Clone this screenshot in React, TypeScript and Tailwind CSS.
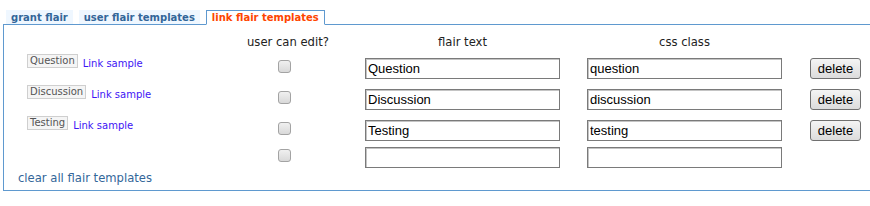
const VERDANA = { fontFamily: '"DejaVu Sans", Verdana, sans-serif' };

const rows = [
  { label: 'Question', text: 'Question', css: 'question', h: 'h-[31px]' },
  { label: 'Discussion', text: 'Discussion', css: 'discussion', h: 'h-[31px]' },
  { label: 'Testing', text: 'Testing', css: 'testing', h: 'h-[27px]' },
];

function Checkbox() {
  return (
    <span className="block h-[13px] w-[13px] rounded-[3px] border border-[#a3a3a3] bg-gradient-to-b from-[#f0f0f0] to-[#d9d9d9]" />
  );
}

function TextBox({ value }: { value: string }) {
  return (
    <input
      type="text"
      defaultValue={value}
      className="block h-[21px] w-[195px] border border-[#7a7a7a] bg-white px-[2px] text-[13px] text-black shadow-[inset_1px_1px_0_#c4c4c4] outline-none font-['Liberation_Sans',Arial,sans-serif]"
    />
  );
}

export default function App() {
  return (
    <div className="h-[206px] w-[870px] overflow-hidden bg-white pl-[3px] pt-[10px]" style={VERDANA}>
      {/* tabs */}
      <div className="flex items-start gap-[6px] pl-[3px] text-[10px] font-bold">
        <span className="h-[14px] bg-[#eff7ff] px-[5px] pt-[1px] leading-[13px] text-[#336699]">grant flair</span>
        <span className="h-[14px] bg-[#eff7ff] px-[5px] pt-[1px] leading-[13px] text-[#336699]">user flair templates</span>
        <span className="relative z-10 -mb-px h-[15px] border border-b-white border-[#5f99cf] bg-white px-[5px] leading-[13px] text-[#ff4500]">
          link flair templates
        </span>
      </div>

      {/* panel */}
      <div className="h-[167px] border-b border-l border-t border-[#5f99cf] pl-[23px]">
        <div className="flex h-[28px] items-end text-[11.6px] leading-[14px] text-[#222]">
          <div className="w-[219px]" />
          <div className="w-[119px] pl-[1px] pb-[4px]">user can edit?</div>
          <div className="w-[195px] pb-[4px] text-center">flair text</div>
          <div className="ml-[27px] w-[195px] pb-[4px] text-center">css class</div>
        </div>

        {rows.map((r) => (
          <div key={r.label} className={`flex items-start ${r.h}`}>
            <div className="mt-[1px] flex w-[219px] items-start text-[10px]">
              <span className="border border-[#cfcfcf] bg-[#f5f5f5] px-[2px] leading-[12px] text-[#545454]">
                {r.label}
              </span>
              <span className="ml-[5px] mt-[4px] leading-[12px] text-[#3d14f5]">Link sample</span>
            </div>
            <div className="mt-[7px] w-[119px] pl-[32px]">
              <Checkbox />
            </div>
            <div className="mt-[5px]">
              <TextBox value={r.text} />
            </div>
            <div className="ml-[27px] mt-[5px]">
              <TextBox value={r.css} />
            </div>
            <button className="ml-[28px] mt-[5px] h-[21px] w-[51px] rounded-[3px] border border-[#707070] bg-gradient-to-b from-[#f4f4f4] to-[#dcdcdc] text-[13px] leading-[19px] text-black font-['Liberation_Sans',Arial,sans-serif]">
              delete
            </button>
          </div>
        ))}

        <div className="flex h-[26px] items-start">
          <div className="w-[219px]" />
          <div className="mt-[7px] w-[119px] pl-[32px]">
            <Checkbox />
          </div>
          <div className="mt-[5px]">
            <TextBox value="" />
          </div>
          <div className="ml-[27px] mt-[5px]">
            <TextBox value="" />
          </div>
        </div>

        <div className="-ml-[9px] mt-[3px] text-[11.6px] leading-[14px] text-[#336699]">clear all flair templates</div>
      </div>
    </div>
  );
}
